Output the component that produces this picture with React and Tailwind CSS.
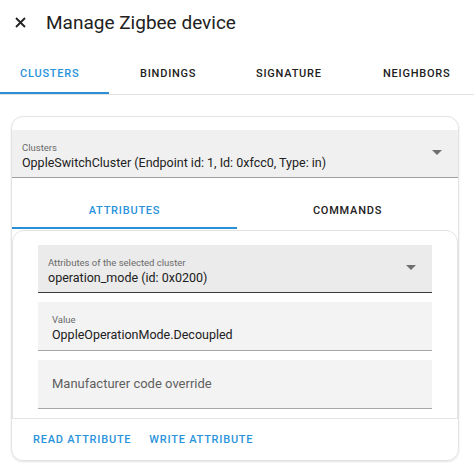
import React from "react";

const Arrow = () => (
  <svg width="10" height="5" viewBox="0 0 10 5" className="shrink-0">
    <path d="M0 0 L10 0 L5 5 Z" fill="#6f6f6f" />
  </svg>
);

export default function App() {
  return (
    <div className="w-[474px] h-[475px] bg-white overflow-hidden font-['Roboto',sans-serif] text-[#212121]">
      {/* header */}
      <div className="h-[44px] flex items-center pl-[15px]">
        <svg width="11" height="11" viewBox="0 0 11 11" className="mr-[20px]">
          <path d="M1 1 L10 10 M10 1 L1 10" stroke="#212121" strokeWidth="1.8" />
        </svg>
        <span className="text-[19px] leading-none">Manage Zigbee device</span>
      </div>
      {/* tabs */}
      <div className="flex border-b border-[#e2e2e2] h-[51px] text-[11px] font-medium tracking-[0.07em]">
        <div className="relative flex items-center pl-[20px] w-[109px] text-[#2993db] pt-[10px]">
          CLUSTERS
          <div className="absolute left-0 right-0 bottom-[0px] h-[2px] bg-[#2b8fd6]" />
        </div>
        <div className="flex items-center pl-[31px] w-[147px] pt-[10px]">BINDINGS</div>
        <div className="flex items-center w-[127px] pt-[10px]">SIGNATURE</div>
        <div className="flex items-center pt-[10px]">NEIGHBORS</div>
      </div>
      {/* outer card */}
      <div className="ml-[11px] mt-[21px] w-[448px] h-[345px] border border-[#e3e3e3] rounded-[12px] shadow-[0_1px_2px_rgba(0,0,0,0.12)] pt-[13px] overflow-hidden flex flex-col">
        <div className="h-[48px] bg-[#f0f0f0] border-b border-[#9e9e9e] flex items-center pl-[10px] pr-[16px]">
          <div className="flex-1 flex flex-col pt-[4px]">
            <span className="text-[9.5px] text-[#6a6a6a] leading-[11px]">Clusters</span>
            <span className="text-[12.5px] leading-[15px] mt-[2px]">OppleSwitchCluster (Endpoint id: 1, Id: 0xfcc0, Type: in)</span>
          </div>
          <div className="mt-[-2px]"><Arrow /></div>
        </div>
        {/* inner tabs */}
        <div className="flex h-[51px] text-[11px] font-medium tracking-[0.07em]">
          <div className="relative w-[225px] flex items-center justify-center pt-[15px] text-[#2993db]">
            ATTRIBUTES
            <div className="absolute left-0 right-0 bottom-0 h-[2px] bg-[#2b8fd6]" />
          </div>
          <div className="flex-1 flex items-center justify-center pt-[15px]">COMMANDS</div>
        </div>
        {/* inner card */}
        <div className="border border-b border-[#e3e3e3] rounded-t-[12px] mt-[1px] pt-[14px] pb-[9px] px-[25px] flex flex-col gap-[9px]">
          <div className="h-[48px] bg-[#ebebeb] border-b border-[#3a3a3a] flex items-center pl-[10px] pr-[16px]">
            <div className="flex-1 flex flex-col pt-[4px]">
              <span className="text-[9.5px] text-[#6a6a6a] leading-[11px]">Attributes of the selected cluster</span>
              <span className="text-[12.5px] leading-[15px] mt-[2px]">operation_mode (id: 0x0200)</span>
            </div>
            <div className="mt-[-2px]"><Arrow /></div>
          </div>
          <div className="h-[49px] bg-[#f3f3f3] border-b border-[#a6a6a6] flex flex-col justify-center pl-[14px] pt-[4px]">
            <span className="text-[9.5px] text-[#6a6a6a] leading-[11px]">Value</span>
            <span className="text-[12.5px] leading-[15px] mt-[2px]">OppleOperationMode.Decoupled</span>
          </div>
          <div className="h-[49px] bg-[#f3f3f3] border-b border-[#a6a6a6] flex items-center pl-[14px]">
            <span className="text-[13px] text-[#5f5f5f]">Manufacturer code override</span>
          </div>
        </div>
        <div className="flex-1 flex items-center pl-[21px] pt-[1px] gap-[18px] text-[11px] font-medium tracking-[0.07em] text-[#2993db]">
          <span>READ ATTRIBUTE</span>
          <span>WRITE ATTRIBUTE</span>
        </div>
      </div>
    </div>
  );
}
